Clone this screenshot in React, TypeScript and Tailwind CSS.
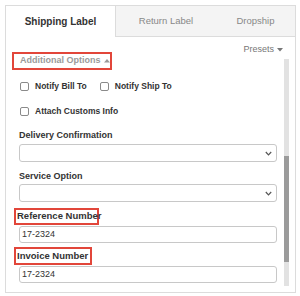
import React from 'react';

// Shipping options panel — tabs, collapsible "Additional Options", a few
// selects and text fields. Red boxes are annotation highlights.

const font = { fontFamily: '"Liberation Sans", Arial, sans-serif' };

function Checkbox({ label }: { label: string }) {
  return (
    <label className="flex items-center gap-[6px] whitespace-nowrap">
      <span className="h-[9px] w-[9px] rounded-[2px] border border-[#8a8a8a] bg-white" />
      <span className="text-[8.5px] font-bold text-[#333]">{label}</span>
    </label>
  );
}

function Chevron() {
  return (
    <svg width="7" height="5" viewBox="0 0 7 5" className="text-[#555]">
      <path d="M0.8 1 L3.5 3.8 L6.2 1" fill="none" stroke="currentColor" strokeWidth="1.2" />
    </svg>
  );
}

function SelectBox() {
  return (
    <div className="flex h-[18px] w-[258px] items-center justify-end rounded-[3px] border border-[#c8c8c8] bg-white pr-[4px]">
      <Chevron />
    </div>
  );
}

function TextBox({ value }: { value: string }) {
  return (
    <div className="flex h-[17px] w-[258px] items-center rounded-[3px] border border-[#c8c8c8] bg-white pl-[2px] text-[9px] text-[#333]">
      {value}
    </div>
  );
}

export default function App() {
  return (
    <div className="h-[296px] w-[300px] bg-white pl-[5px] pt-[5px]" style={font}>
      <div className="flex h-[288px] w-[291px] flex-col border border-[#dcdcdc]">
        {/* Tabs */}
        <div className="flex h-[31px] shrink-0 whitespace-nowrap">
          <div className="flex w-[110px] items-center justify-center border-r border-[#dcdcdc] bg-white text-[10px] font-bold text-[#333]">
            Shipping Label
          </div>
          <div className="flex w-[100px] items-center justify-center border-b border-[#dcdcdc] bg-[#f4f4f4] text-[9.5px] text-[#888]">
            Return Label
          </div>
          <div className="flex flex-1 items-center justify-center border-b border-[#dcdcdc] bg-[#f4f4f4] text-[9.5px] text-[#888]">
            Dropship
          </div>
        </div>

        {/* Body */}
        <div className="flex flex-1 overflow-hidden">
          <div className="flex flex-1 flex-col pl-[13px]">
            <div className="mt-[7px] flex h-[12px] items-center justify-end gap-[3px] pr-[1px] text-[9px] text-[#777]">
              Presets
              <svg width="6" height="4" viewBox="0 0 6 4"><path d="M0 0 H6 L3 3.5 Z" fill="#777" /></svg>
            </div>

            <div className="-ml-[7px] -mt-[4px] flex h-[18px] w-[100px] items-center gap-[3px] whitespace-nowrap border-2 border-[#e2463a] pl-[6px] text-[9px] font-bold text-[#9a9a9a]">
              Additional Options
              <svg width="6" height="4" viewBox="0 0 6 4"><path d="M0 3.5 H6 L3 0 Z" fill="#9a9a9a" /></svg>
            </div>

            <div className="ml-[1px] mt-[10px] flex h-[12px] items-center gap-[13px]">
              <Checkbox label="Notify Bill To" />
              <Checkbox label="Notify Ship To" />
            </div>
            <div className="ml-[1px] mt-[13px] flex h-[12px] items-center">
              <Checkbox label="Attach Customs Info" />
            </div>

            <div className="mt-[12px] h-[12px] whitespace-nowrap text-[9px] font-bold leading-[12px] text-[#333]">Delivery Confirmation</div>
            <div className="mt-[3px]">
              <SelectBox />
            </div>

            <div className="mt-[8px] h-[12px] whitespace-nowrap text-[9px] font-bold leading-[12px] text-[#333]">Service Option</div>
            <div className="mt-[2px]">
              <SelectBox />
            </div>

            <div className="-ml-[5px] mt-[6px] flex h-[17px] w-[85px] items-center whitespace-nowrap border-2 border-[#e2463a] pl-[1px] text-[9.5px] font-bold text-[#333]">
              Reference Number
            </div>
            <div className="mt-px">
              <TextBox value="17-2324" />
            </div>

            <div className="-ml-[5px] mt-[4px] flex h-[18px] w-[78px] items-center whitespace-nowrap border-2 border-[#e2463a] pl-[1px] text-[9.5px] font-bold text-[#333]">
              Invoice Number
            </div>
            <div className="mt-px">
              <TextBox value="17-2324" />
            </div>
          </div>

          {/* Scrollbar */}
          <div className="mr-[6px] mt-[22px] mb-[6px] flex w-[5px] shrink-0 flex-col bg-[#e2e2e2]">
            <div className="h-[97px]" />
            <div className="h-[106px] bg-[#9b9b9b]" />
          </div>
        </div>
      </div>
    </div>
  );
}
